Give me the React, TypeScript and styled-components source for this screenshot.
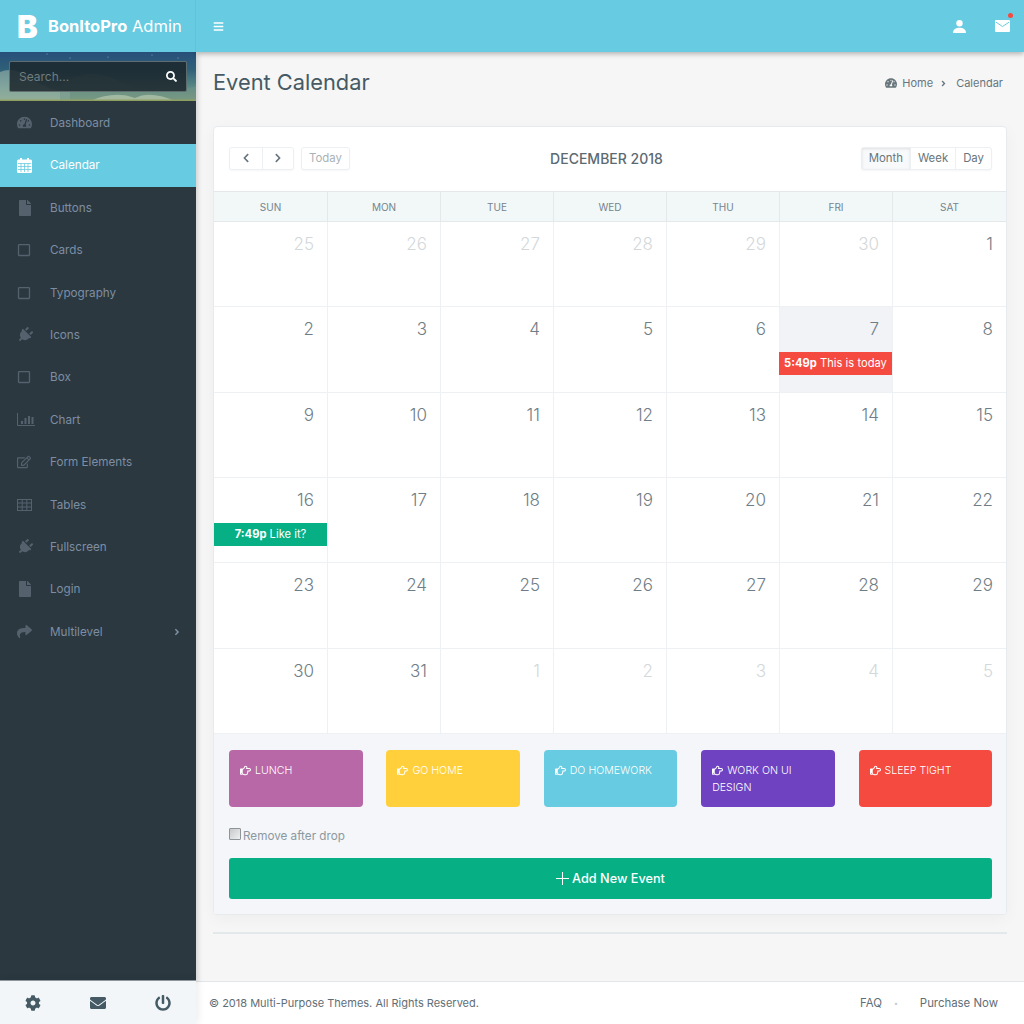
import styled, { createGlobalStyle } from 'styled-components';
import {
  FaAngleRight,
  FaBars,
  FaChevronLeft,
  FaChevronRight,
  FaCog,
  FaEnvelope,
  FaFile,
  FaPlug,
  FaPowerOff,
  FaRegEdit,
  FaRegHandPointRight,
  FaRegSquare,
  FaSearch,
  FaShare,
  FaTachometerAlt,
} from 'react-icons/fa';
import type { ComponentType } from 'react';

const FONT = `Inter, "Open Sans", "Liberation Sans", sans-serif`;

const GlobalStyle = createGlobalStyle`
  html, body {
    margin: 0;
    padding: 0;
    background: #f6f6f6;
    font-family: ${FONT};
    color: #67757c;
  }
  * { box-sizing: border-box; }
`;

const Page = styled.div`
  display: grid;
  grid-template-columns: 196px 1fr;
  grid-template-rows: 52px 1fr 43px;
  height: 1024px;
  width: 1024px;
  overflow: hidden;
`;

const Brand = styled.div`
  display: flex;
  align-items: center;
  gap: 12px;
  padding-left: 17px;
  background: #67cbe1;
  border-right: 1px solid #60c3d9;
  color: #fff;
  position: relative;
  z-index: 3;
`;

const LogoMark = styled.span`
  font-size: 31px;
  font-weight: 900;
  line-height: 1;
  width: 19px;
`;

const BrandName = styled.span`
  font-size: 16.5px;
  white-space: nowrap;

  b {
    font-weight: 700;
  }
`;

const TopBar = styled.header`
  display: flex;
  align-items: center;
  justify-content: space-between;
  padding: 0 14px 0 17px;
  background: #67cbe1;
  color: #fff;
  box-shadow: 0 2px 5px rgba(0, 0, 0, 0.28);
  position: relative;
  z-index: 2;
`;

const TopActions = styled.div`
  display: flex;
  align-items: center;
  gap: 29px;
`;

const MailButton = styled.span`
  position: relative;
  display: flex;

  &::after {
    content: '';
    position: absolute;
    top: -7px;
    right: -3px;
    width: 5px;
    height: 5px;
    border-radius: 50%;
    background: #f44a40;
  }
`;

const Sidebar = styled.aside`
  grid-row: 2;
  background: #2b3840;
  box-shadow: 1px 0 6px rgba(0, 0, 0, 0.2);
  position: relative;
  z-index: 1;
`;

const SearchStrip = styled.div`
  position: relative;
  height: 49px;
  padding: 9px 9px 0;
  overflow: hidden;
  background: linear-gradient(180deg, #27507a 0%, #2f5f78 35%, #5b8a85 72%, #84a07c 100%);
`;

const Hills = styled.svg`
  position: absolute;
  left: 0;
  top: 0;
  width: 100%;
  height: 100%;
`;

const SearchBox = styled.div`
  position: relative;
  display: flex;
  align-items: center;
  justify-content: space-between;
  height: 31px;
  padding: 0 9px 0 9px;
  background: rgba(28, 38, 44, 0.86);
  border: 1px solid rgba(120, 135, 135, 0.7);
  border-radius: 2px;
  color: #fff;
  font-size: 12px;

  span {
    color: #6f7d7e;
  }
`;

const Menu = styled.nav`
  display: flex;
  flex-direction: column;
  padding-top: 0.8px;
`;

const MenuItem = styled.div<{ $active?: boolean }>`
  display: flex;
  align-items: center;
  height: 42.4px;
  padding: 0 14px 0 17px;
  font-size: 11.7px;
  background: ${(p) => (p.$active ? '#67cbe1' : 'transparent')};
  color: ${(p) => (p.$active ? '#ffffff' : '#7d8ea3')};
`;

const MenuIcon = styled.span<{ $active?: boolean; $height: number }>`
  display: flex;
  align-items: center;
  width: 33px;
  color: ${(p) => (p.$active ? '#ffffff' : '#56616e')};

  svg {
    height: ${(p) => p.$height}px;
    width: auto;
  }
`;

const MenuLabel = styled.span`
  flex: 1;
`;

const DiagonalPlug = styled(FaPlug)`
  transform: rotate(45deg);
`;

const Content = styled.main`
  grid-row: 2;
  display: flex;
  flex-direction: column;
  padding: 0 17px 0 17px;
  background: #f6f6f6;
`;

const TitleRow = styled.div`
  display: flex;
  align-items: center;
  justify-content: space-between;
  height: 74px;
  padding-bottom: 14px;
`;

const PageTitle = styled.h1`
  margin: 0;
  font-size: 21.8px;
  font-weight: 400;
  color: #455a64;
`;

const Crumbs = styled.div`
  display: flex;
  align-items: center;
  padding: 2px 4px 0 0;
  font-size: 11px;
  color: #67757c;
`;

const CrumbHome = styled.span`
  margin: 0 6px 0 5px;
`;

const CrumbCurrent = styled.span`
  margin-left: 8px;
`;

const Card = styled.section`
  background: #fff;
  border: 1px solid #e8ebee;
  border-radius: 4px;
  box-shadow: 0 4px 16px rgba(0, 0, 0, 0.04);
  overflow: hidden;
`;

const Toolbar = styled.div`
  display: grid;
  grid-template-columns: 1fr auto 1fr;
  align-items: center;
  height: 64px;
  padding: 0 14px 2px 15px;
`;

const ToolGroup = styled.div`
  display: flex;
  gap: 7px;
`;

const ToolGroupEnd = styled(ToolGroup)`
  justify-content: flex-end;
`;

const ButtonSet = styled.div`
  display: flex;
  height: 23px;
  border: 1px solid #edf0f2;
  border-radius: 3px;
  background: #fff;
  box-shadow: 0 1px 2px rgba(0, 0, 0, 0.04);
`;

const ToolButton = styled.span<{ $pressed?: boolean; $muted?: boolean }>`
  display: flex;
  align-items: center;
  justify-content: center;
  padding: 0 7px;
  min-width: 31.5px;
  font-size: 11.4px;
  color: ${(p) => (p.$muted ? '#a9b2b7' : '#67757c')};
  background: ${(p) => (p.$pressed ? '#f8f9fa' : 'transparent')};
  box-shadow: ${(p) => (p.$pressed ? 'inset 0 1px 3px rgba(0,0,0,0.1)' : 'none')};

  & + & {
    border-left: 1px solid #edf0f2;
  }
`;

const MonthTitle = styled.h2`
  margin: 0;
  padding-right: 8px;
  font-size: 14px;
  font-weight: 500;
  color: #5b6a72;
`;

const CalendarGrid = styled.div`
  display: grid;
  grid-template-columns: repeat(6, 113px) 1fr;
`;

const DayHead = styled.div`
  display: flex;
  align-items: center;
  justify-content: center;
  height: 31px;
  background: #f2f7f8;
  border-top: 1px solid #e4e8ea;
  border-bottom: 1px solid #e4e8ea;
  border-left: 1px solid #e4e8ea;
  font-size: 10px;
  color: #76848c;

  &:first-child {
    border-left: none;
  }
`;

const DayCell = styled.div<{ $today?: boolean; $first?: boolean }>`
  height: 85.33px;
  padding-top: 12px;
  background: ${(p) => (p.$today ? '#f1f3f7' : '#fff')};
  border-left: ${(p) => (p.$first ? 'none' : '1px solid #eef1f3')};
  border-bottom: 1px solid #eef1f3;
`;

const DayNumber = styled.div<{ $other?: boolean }>`
  height: 21px;
  padding-right: 13px;
  text-align: right;
  font-size: 17px;
  font-weight: 300;
  line-height: 21px;
  color: ${(p) => (p.$other ? '#d3d8db' : '#6f7d86')};
`;

const EventBar = styled.div<{ $color: string; $bleed?: boolean }>`
  margin-top: 12px;
  margin-left: ${(p) => (p.$bleed ? '-1px' : '0')};
  height: 23px;
  line-height: 23px;
  text-align: center;
  white-space: nowrap;
  font-size: 11.2px;
  color: #fff;
  background: ${(p) => p.$color};

  b {
    font-weight: 700;
  }
`;

const External = styled.div`
  padding: 16px 14px 15px 15px;
  background: #f4f6f9;
`;

const DragRow = styled.div`
  display: grid;
  grid-template-columns: repeat(5, 133.5px);
  justify-content: space-between;
`;

const DragChip = styled.div<{ $color: string }>`
  height: 57px;
  padding: 12px 11px;
  border-radius: 4px;
  background: ${(p) => p.$color};
  color: #fff;
  font-size: 10.6px;
  font-weight: 300;
  line-height: 17px;

  svg {
    vertical-align: -2px;
    margin-right: 4px;
    font-size: 11px;
  }
`;

const DropOption = styled.label`
  display: flex;
  align-items: center;
  gap: 2px;
  height: 18px;
  margin-top: 20px;
  font-size: 11.7px;
  color: #8c98a0;
`;

const FakeCheck = styled.span`
  width: 12px;
  height: 12px;
  margin-top: -4px;
  border: 1px solid #8f9498;
  border-radius: 1px;
  background: linear-gradient(135deg, #c7c9cb, #eef0f1);
`;

const AddButton = styled.div`
  display: flex;
  align-items: center;
  justify-content: center;
  gap: 3px;
  height: 41px;
  margin-top: 13px;
  border-radius: 3px;
  background: #06b084;
  color: #fff;
  font-size: 12.7px;
  font-weight: 450;
`;

const Rule = styled.hr`
  width: 100%;
  margin: 17px 0 0;
  border: none;
  border-top: 2px solid #e3e8ea;
`;

const SideFooter = styled.div`
  display: grid;
  grid-template-columns: repeat(3, 1fr);
  align-items: center;
  margin-top: -1px;
  background: #f2f6f9;
  border-top: 1px solid #8d979c;
  box-shadow: 2px 0 8px rgba(0, 0, 0, 0.08);
  color: #455a64;
  font-size: 16px;
  position: relative;
  z-index: 1;

  svg {
    justify-self: center;
  }
`;

const Footer = styled.footer`
  display: flex;
  align-items: center;
  justify-content: space-between;
  padding: 0 26px 0 13px;
  background: #fff;
  border-top: 1px solid #e3e6e9;
  font-size: 11px;
  color: #5f6e77;
`;

const FooterLinks = styled.div`
  display: flex;
  align-items: center;
  font-size: 11.4px;
`;

const Dot = styled.span`
  margin: 0 22px 0 12px;
  font-size: 7px;
  color: #c3cbd0;
`;

function CalendarIcon() {
  return (
    <svg viewBox="0 0 15 15">
      <path d="M3 0h2v2H3zM10 0h2v2h-2z" fill="currentColor" />
      <rect y="1.5" width="15" height="13.5" rx="1.5" fill="currentColor" />
      <path
        d="M1 5.5h13M1 8.5h13M1 11.5h13M4 5.5V14M7.5 5.5V14M11 5.5V14"
        stroke="#67cbe1"
        strokeWidth="0.8"
        fill="none"
      />
    </svg>
  );
}

function BarsIcon() {
  return (
    <svg viewBox="0 0 18 13">
      <path d="M.5 0v12.5H18" stroke="currentColor" fill="none" />
      <path d="M4 8h2v3H4zM7.5 5h2v6h-2zM11 3h2v8h-2zM14.5 4h2v7h-2z" fill="currentColor" />
    </svg>
  );
}

function GridIcon() {
  return (
    <svg viewBox="0 0 15 12">
      <rect x=".5" y=".5" width="14" height="11" fill="none" stroke="currentColor" />
      <path
        d="M1 4h13M1 8h13M5.2 1v10M9.8 1v10"
        stroke="currentColor"
        fill="none"
      />
    </svg>
  );
}

function UserIcon() {
  return (
    <svg width="13" height="13" viewBox="0 0 13 13" fill="currentColor">
      <circle cx="6.5" cy="3.3" r="3.2" />
      <path d="M0 13c0-3.6 2.8-5.2 6.5-5.2S13 9.4 13 13z" />
    </svg>
  );
}

function MailIcon() {
  return (
    <svg width="15" height="12" viewBox="0 0 15 12">
      <rect width="15" height="12" rx="1" fill="currentColor" />
      <path d="M1 2.2l6.5 4.3L14 2.2" fill="none" stroke="#67cbe1" />
    </svg>
  );
}

function PlusIcon() {
  return (
    <svg width="13" height="13" viewBox="0 0 13 13">
      <path d="M6.5 0v13M0 6.5h13" stroke="currentColor" fill="none" />
    </svg>
  );
}

type NavEntry = {
  label: string;
  icon: ComponentType;
  height: number;
  active?: boolean;
  more?: boolean;
};

const NAV: NavEntry[] = [
  { label: 'Dashboard', icon: FaTachometerAlt, height: 15 },
  { label: 'Calendar', icon: CalendarIcon, height: 15, active: true },
  { label: 'Buttons', icon: FaFile, height: 16 },
  { label: 'Cards', icon: FaRegSquare, height: 14 },
  { label: 'Typography', icon: FaRegSquare, height: 14 },
  { label: 'Icons', icon: DiagonalPlug, height: 16 },
  { label: 'Box', icon: FaRegSquare, height: 14 },
  { label: 'Chart', icon: BarsIcon, height: 13 },
  { label: 'Form Elements', icon: FaRegEdit, height: 14 },
  { label: 'Tables', icon: GridIcon, height: 12 },
  { label: 'Fullscreen', icon: DiagonalPlug, height: 16 },
  { label: 'Login', icon: FaFile, height: 16 },
  { label: 'Multilevel', icon: FaShare, height: 15, more: true },
];

const DAYS = ['SUN', 'MON', 'TUE', 'WED', 'THU', 'FRI', 'SAT'];

const CHIPS = [
  { label: 'LUNCH', color: '#b867a7' },
  { label: 'GO HOME', color: '#ffd03c' },
  { label: 'DO HOMEWORK', color: '#67cbe1' },
  { label: 'WORK ON UI DESIGN', color: '#6f42c1' },
  { label: 'SLEEP TIGHT', color: '#f44a40' },
];

// 25 Nov .. 5 Jan, december is the only month in range
const CELLS = Array.from({ length: 42 }, (_, i) => {
  if (i < 6) return { day: 25 + i, other: true };
  if (i < 37) return { day: i - 5, other: false };
  return { day: i - 36, other: true };
});

export default function App() {
  return (
    <>
      <GlobalStyle />
      <Page>
        <Brand>
          <LogoMark>B</LogoMark>
          <BrandName>
            <b>BonItoPro</b> Admin
          </BrandName>
        </Brand>
        <TopBar>
          <FaBars size={11} />
          <TopActions>
            <UserIcon />
            <MailButton>
              <MailIcon />
            </MailButton>
          </TopActions>
        </TopBar>

        <Sidebar>
          <SearchStrip>
            <Hills viewBox="0 0 196 49" preserveAspectRatio="none">
              <path d="M0 20 Q14 14 30 26 T70 40 V49 H0 Z" fill="#a3bbb0" opacity="0.55" />
              <path d="M60 34 Q90 12 120 30 T196 34 V49 H60 Z" fill="#6f9488" opacity="0.5" />
              <path d="M90 49 Q115 38 135 46 Q150 38 175 49 Z" fill="#b7c9ae" opacity="0.7" />
              <path d="M0 47.5 H196 V49 H0 Z" fill="#8f9f62" />
              <g fill="#cfe0ea" opacity="0.7">
                <circle cx="47" cy="2" r="0.5" />
                <circle cx="70" cy="6" r="0.5" />
                <circle cx="108" cy="5" r="0.5" />
                <circle cx="152" cy="3" r="0.5" />
                <circle cx="178" cy="6" r="0.5" />
              </g>
            </Hills>
            <SearchBox>
              <span>Search...</span>
              <FaSearch size={11} />
            </SearchBox>
          </SearchStrip>
          <Menu>
            {NAV.map(({ label, icon: Icon, height, active, more }) => (
              <MenuItem key={label} $active={active}>
                <MenuIcon $active={active} $height={height}>
                  <Icon />
                </MenuIcon>
                <MenuLabel>{label}</MenuLabel>
                {more && <FaAngleRight size={10} />}
              </MenuItem>
            ))}
          </Menu>
        </Sidebar>

        <Content>
          <TitleRow>
            <PageTitle>Event Calendar</PageTitle>
            <Crumbs>
              <FaTachometerAlt size={12} />
              <CrumbHome>Home</CrumbHome>
              <FaAngleRight size={9} />
              <CrumbCurrent>Calendar</CrumbCurrent>
            </Crumbs>
          </TitleRow>

          <Card>
            <Toolbar>
              <ToolGroup>
                <ButtonSet>
                  <ToolButton>
                    <FaChevronLeft size={10} />
                  </ToolButton>
                  <ToolButton>
                    <FaChevronRight size={10} />
                  </ToolButton>
                </ButtonSet>
                <ButtonSet>
                  <ToolButton $muted>Today</ToolButton>
                </ButtonSet>
              </ToolGroup>
              <MonthTitle>DECEMBER 2018</MonthTitle>
              <ToolGroupEnd>
                <ButtonSet>
                  <ToolButton $pressed>Month</ToolButton>
                  <ToolButton>Week</ToolButton>
                  <ToolButton>Day</ToolButton>
                </ButtonSet>
              </ToolGroupEnd>
            </Toolbar>

            <CalendarGrid>
              {DAYS.map((d) => (
                <DayHead key={d}>{d}</DayHead>
              ))}
              {CELLS.map((c, i) => {
                const today = !c.other && c.day === 7;
                const liked = !c.other && c.day === 16;
                return (
                  <DayCell key={i} $today={today} $first={i % 7 === 0}>
                    <DayNumber $other={c.other}>{c.day}</DayNumber>
                    {today && (
                      <EventBar $color="#f44a40" $bleed>
                        <b>5:49p</b> This is today
                      </EventBar>
                    )}
                    {liked && (
                      <EventBar $color="#06b084">
                        <b>7:49p</b> Like it?
                      </EventBar>
                    )}
                  </DayCell>
                );
              })}
            </CalendarGrid>

            <External>
              <DragRow>
                {CHIPS.map((chip) => (
                  <DragChip key={chip.label} $color={chip.color}>
                    <FaRegHandPointRight />
                    {chip.label}
                  </DragChip>
                ))}
              </DragRow>
              <DropOption>
                <FakeCheck />
                Remove after drop
              </DropOption>
              <AddButton>
                <PlusIcon /> Add New Event
              </AddButton>
            </External>
          </Card>
          <Rule />
        </Content>

        <SideFooter>
          <FaCog />
          <FaEnvelope />
          <FaPowerOff />
        </SideFooter>
        <Footer>
          <span>© 2018 Multi-Purpose Themes. All Rights Reserved.</span>
          <FooterLinks>
            <span>FAQ</span>
            <Dot>•</Dot>
            <span>Purchase Now</span>
          </FooterLinks>
        </Footer>
      </Page>
    </>
  );
}
